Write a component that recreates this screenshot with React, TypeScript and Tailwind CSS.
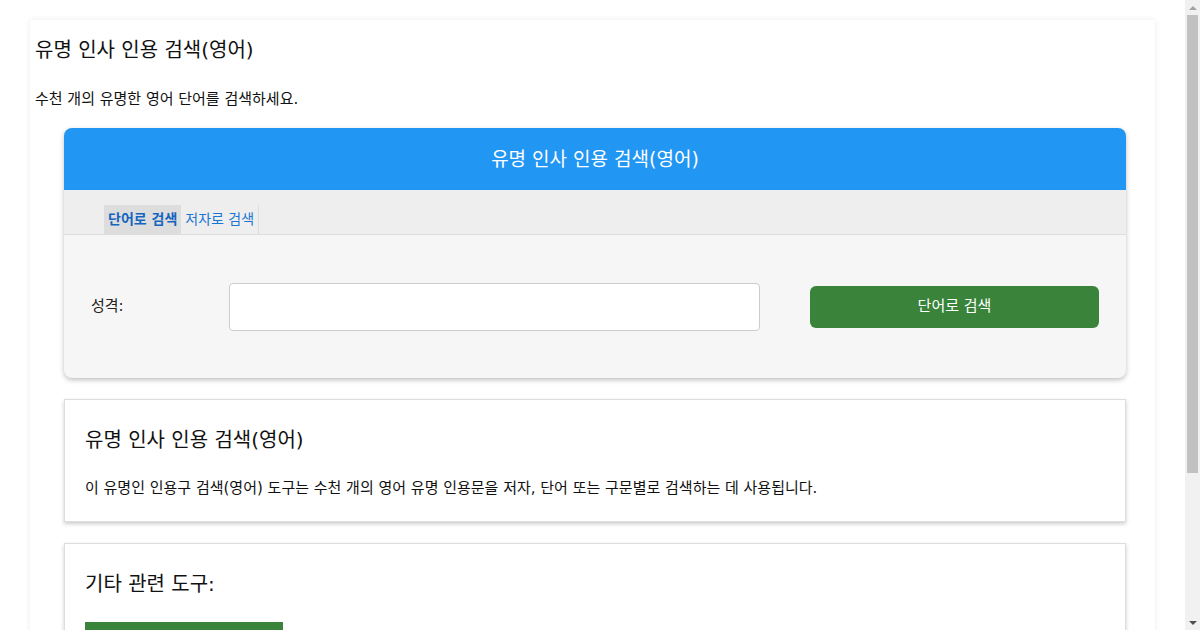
const font = { fontFamily: '"DejaVu Sans", "Noto Sans CJK KR", sans-serif' };

function ToolBox() {
    return (
        <div className="ml-[29px] mr-[29px] mt-[18px] rounded-lg bg-[#f6f6f6] shadow-[0_2px_5px_rgba(0,0,0,0.25)] overflow-hidden">
            <div className="h-[62px] bg-[#2196f3] flex items-center justify-center text-white text-[19px]">
                유명 인사 인용 검색(영어)
            </div>
            <div className="bg-[#eeeeee] border-b border-[#dddddd] pt-[15px] pl-[40px] flex">
                <button className="h-[29px] px-[4px] bg-[#dddddd] text-[#1565c0] font-bold text-[14px]">
                    단어로 검색
                </button>
                <button className="h-[29px] px-[4px] text-[#1976d2] text-[14px] border-r border-[#dddddd]">
                    저자로 검색
                </button>
            </div>
            <div className="h-[143px] flex items-center pl-[27px] pr-[27px]">
                <label className="w-[138px] text-[15px] text-[#222]">성격:</label>
                <input className="w-[531px] h-[48px] bg-white border border-[#cccccc] rounded-[4px]" />
                <button className="ml-[50px] w-[289px] h-[42px] rounded-[6px] bg-[#3a833a] text-white text-[15px]">
                    단어로 검색
                </button>
            </div>
        </div>
    );
}

function InfoBox({ title, children }: { title: string; children: React.ReactNode }) {
    return (
        <div className="ml-[29px] mr-[29px] mt-[21px] bg-white border border-[#dddddd] shadow-[0_2px_4px_rgba(0,0,0,0.2)] px-[20px] pt-[25px] pb-[22px]">
            <h2 className="text-[20px] leading-[30px] text-[#111]">{title}</h2>
            {children}
        </div>
    );
}

function Scrollbar() {
    return (
        <div className="w-[15px] shrink-0 bg-[#f1f1f1] flex flex-col items-center">
            <div className="h-[15px] flex items-center justify-center">
                <div className="w-0 h-0 border-l-[4px] border-r-[4px] border-b-[4px] border-l-transparent border-r-transparent border-b-[#a3a3a3]" />
            </div>
            <div className="w-[11px] h-[458px] bg-[#c1c1c1]" />
            <div className="flex-1" />
            <div className="h-[15px] flex items-center justify-center">
                <div className="w-0 h-0 border-l-[4px] border-r-[4px] border-t-[4px] border-l-transparent border-r-transparent border-t-[#505050]" />
            </div>
        </div>
    );
}

export default function App() {
    const tools = ["유명 인사 인용 검색", "영어 단어 검색", "저자 검색", "인용문 생성기"];
    return (
        <div className="h-screen flex bg-white overflow-hidden" style={font}>
            <div className="flex-1 min-w-0 pt-[20px]">
                <div className="mx-[30px] bg-white pl-[5px] pt-[15px] pb-[30px] shadow-[0_0_6px_rgba(0,0,0,0.08)]">
                    <h1 className="text-[20px] leading-[30px] text-[#111]">유명 인사 인용 검색(영어)</h1>
                    <p className="mt-[23px] text-[15px] leading-[22px] text-[#111]">
                        수천 개의 유명한 영어 단어를 검색하세요.
                    </p>
                    <ToolBox />
                    <InfoBox title="유명 인사 인용 검색(영어)">
                        <p className="mt-[22px] text-[15px] leading-[22px] text-[#111]">
                            이 유명인 인용구 검색(영어) 도구는 수천 개의 영어 유명 인용문을 저자, 단어 또는 구문별로 검색하는 데 사용됩니다.
                        </p>
                    </InfoBox>
                    <InfoBox title="기타 관련 도구:">
                        <div className="mt-[23px] flex flex-col gap-[10px]">
                            {tools.map((t) => (
                                <a key={t} className="w-[198px] h-[46px] bg-[#3a833a] text-white text-[15px] flex items-center justify-center">
                                    {t}
                                </a>
                            ))}
                        </div>
                    </InfoBox>
                </div>
            </div>
            <Scrollbar />
        </div>
    );
}
